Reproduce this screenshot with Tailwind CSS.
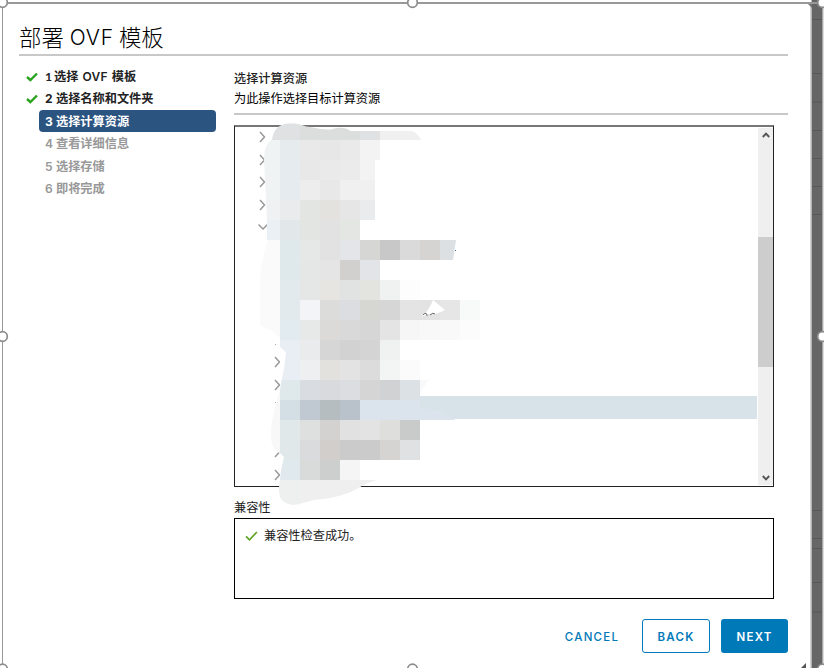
<!DOCTYPE html>
<html lang="zh-CN">
<head>
    <meta charset="UTF-8">
    <meta name="viewport" content="width=device-width, initial-scale=1.0">
    <title>部署 OVF 模板</title>
    <script src="https://cdn.jsdelivr.net/npm/@tailwindcss/browser@4"></script>
</head>
<body class="bg-white overflow-hidden font-['Lato','Noto_Sans_CJK_SC',sans-serif] text-[#222]">
    <div class="relative flex w-[824px] h-[668px] overflow-hidden">
        <!-- Dialog -->
        <div class="flex flex-col w-[811px] h-full pl-[19px] pr-[23px] border-t-2 border-transparent">
            <h1 class="flex items-center h-[54px] pt-[19px] text-[22.4px] font-light leading-[32px] text-black whitespace-nowrap border-b-2 border-[#c8c8c8]">
                <span>部署</span>
                <span class="ml-[6px] mr-[5px] font-['Inter'] text-[21px] font-light tracking-[0.8px]">OVF</span>
                <span>模板</span>
            </h1>

            <div class="flex">
                <!-- Steps -->
                <ol class="w-[215px] pt-[9px] pr-[18px] text-[12.2px] font-bold leading-[23.4px] whitespace-nowrap">
                    <li class="flex items-center h-[22.4px] pt-[1px]">
                        <svg class="w-[12px] h-[10px] ml-[7px] mr-[7px]" viewBox="0 0 12 10"><path d="M1 5l3.4 3L11 1.500" fill="none" stroke="#2ba51f" stroke-width="2.400"/></svg>
                        <span class="w-[9px]">1</span>选择
                        <span class="mx-[4px] font-['Inter'] font-semibold text-[12px] tracking-[0.3px]">OVF</span>模板
                    </li>
                    <li class="flex items-center h-[22.4px] pt-[1px]">
                        <svg class="w-[12px] h-[10px] ml-[7px] mr-[7px]" viewBox="0 0 12 10"><path d="M1 5l3.4 3L11 1.500" fill="none" stroke="#2ba51f" stroke-width="2.400"/></svg>
                        <span class="w-[11px] font-['Inter'] text-[12px]">2</span>选择名称和文件夹
                    </li>
                    <li class="flex ml-[20px] pl-[6px] h-[22.4px] rounded bg-[#2b5480] text-white">
                        <span class="w-[11px] font-['Inter'] text-[12px]">3</span>选择计算资源
                    </li>
                    <li class="flex pl-[26px] h-[22.4px] text-[#989898]">
                        <span class="w-[11px] font-['Inter'] text-[12px] font-semibold">4</span>查看详细信息
                    </li>
                    <li class="flex pl-[26px] h-[22.4px] text-[#989898]">
                        <span class="w-[11px] font-['Inter'] text-[12px] font-semibold">5</span>选择存储
                    </li>
                    <li class="flex pl-[26px] h-[22.4px] text-[#989898]">
                        <span class="w-[11px] font-['Inter'] text-[12px] font-semibold">6</span>即将完成
                    </li>
                </ol>

                <!-- Step content -->
                <div class="w-[554px] text-[12.2px]">
                    <div class="h-[59px] pt-[13px] border-b-2 border-[#c8c8c8]">
                        <h2 class="h-[20px] leading-[20px] font-medium">选择计算资源</h2>
                        <p class="leading-[20px] text-black">为此操作选择目标计算资源</p>
                    </div>

                    <!-- Resource tree -->
                    <div class="flex w-[540px] h-[362px] mt-[10px] border border-[#222] border-t-2 border-t-[#777]">
                        <ul id="tree" class="w-[522px] -mt-[1px] overflow-hidden"></ul>
                        <div class="flex flex-col items-center w-[15px] ml-[1px] my-[1px] bg-[#efefef]">
                            <svg class="w-[8px] h-[6px] mt-[4px]" viewBox="0 0 8 6"><path d="M.8 5L4 1.6 7.2 5" fill="none" stroke="#555" stroke-width="1.900"/></svg>
                            <div class="w-full h-[130px] mt-[99px] bg-[#cdcdcd]"></div>
                            <svg class="w-[8px] h-[6px] mt-auto mb-[4px]" viewBox="0 0 8 6"><path d="M.8 1L4 4.4 7.2 1" fill="none" stroke="#555" stroke-width="1.900"/></svg>
                        </div>
                    </div>

                    <!-- Compatibility -->
                    <h3 class="h-[31px] pt-[11px] leading-[20px]">兼容性</h3>
                    <div class="flex w-[540px] h-[81px] pt-[7px] pl-[10px] border border-black">
                        <svg class="w-[13px] h-[10px] mt-[5px] mr-[6px]" viewBox="0 0 12 10"><path d="M.6 5.4l3.4 3.4L11.4 1" fill="none" stroke="#5aa220" stroke-width="1.600"/></svg>
                        <p class="leading-[20px]">兼容性检查成功。</p>
                    </div>
                </div>
            </div>

            <!-- Buttons -->
            <div class="flex justify-end mt-[20px] font-['Inter'] text-[11.5px] font-medium tracking-[1.25px] text-[#0079b8]">
                <button class="w-[78px] h-[34px] mr-[11px] pt-[3px]">CANCEL</button>
                <button class="w-[68px] h-[34px] mr-[11px] pt-[3px] font-semibold border border-[#0079b8] rounded-[3px]">BACK</button>
                <button class="w-[67px] h-[34px] pt-[3px] font-semibold rounded-[3px] bg-[#0079b8] text-white">NEXT</button>
            </div>
        </div>

        <!-- Dimmed page behind the dialog -->
        <div class="w-[12px] h-full bg-[#666] border-l border-[#bbb]"></div>

        <svg id="overlay" class="absolute inset-0" width="824" height="668" viewBox="0 0 824 668">
            <!-- Smudged area over the tree -->
            <g id="smudge">
                <path d="M272 140C273 130 279 124 288 123.500C298 123 302 125 306 126.500C318 128 322 130 331 129.500C339 126.500 347 128 350 131H410C416 132 419 136 420.500 140Z" fill="#e0e1e2"/>
                <path d="M300 126L318 129 330 130 340 128 347 129 350 131H360V140H300Z" fill="#dcdddd"/>
                <path d="M380 131H410C416 132 419 136 420.500 140H380Z" fill="#f0f0f0"/>
                <path d="M280 140H271C266 144 264 151 264 160L266 200H280Z" fill="#eff3f4"/>
                <path d="M266 200H280V220H267Z" fill="#f0f1f3"/>
                <path d="M267 220H280V240H267Z" fill="#eaf0f4"/>
                <path d="M268 240H280V338L274 332C272 330 262 329 260 324V278Q262 256 268 240Z" fill="#fafafa"/>
                <path d="M280 390Q270 420 271 440Q274 452 280 453Z" fill="#f8f8f8"/>
                <path d="M420 380H429L420 392Z" fill="#f8f9fa"/>
                <path d="M360 400H420V408Q443 410 455 420H360Z" fill="#dbe3ec"/>
                <path d="M280 480H377C361 484 359 490 345 494C328 500 317 498 303 503Q288 507 281 499Q278 492 280 480Z" fill="#efefef"/>
                <path d="M280 480H300V504Q288 507 281 499Q278 492 280 480Z" fill="#edf0ee"/>
            </g>
            <g id="blocks" shape-rendering="crispEdges"></g>
            <path d="M433 300l12 10q-8 5-16 4l-8 3q8-6 12-17z" fill="#fff"/>
            <path d="M423 315q4-4 4 1M430 315q3-3 5-1" fill="none" stroke="#666" stroke-width="1"/>
            <path d="M280 347l6 5q-1 16-5 31l-1 7zM280 453l4 4-3 13-1 10z" fill="#fff"/>
            <path d="M456 240h5v20h-8z" fill="#fff"/>
            <path d="M455 250.500h1" stroke="#2a6fb0"/>
            <path d="M275 402.500h1M275 344.500h1" stroke="#aaa"/>

            <!-- Lines of the page behind -->
            <path d="M812 19.500h10M812 73.500h10M812 102h10M812 130.500h10M812 158.500h10M812 186.500h10M812 214.500h10M812 510.500h10M812 538.500h10M812 548.500h10M812 582.500h10M812 612h10" stroke="#575757"/>

            <!-- Selection frame and handles -->
            <path d="M2 3H820" stroke="#999" stroke-width="2"/>
            <path d="M2.500 4V668" stroke="#999"/>
            <path d="M811 4V668" stroke="#aaa"/>
            <path d="M808 4h4v4z" fill="#777"/>
            <path d="M822.500 4V668" stroke="#a5a5a5" stroke-width="1"/>
            <path d="M823.500 4V668" stroke="#ddd"/>
            <g fill="#fff" stroke="#8c8c8c" stroke-width="1.700">
                <circle cx="2.500" cy="2.500" r="4.800"/>
                <circle cx="412.500" cy="2.500" r="4.800"/>
                <circle cx="822.500" cy="2.500" r="4.800"/>
                <circle cx="2.500" cy="336.500" r="4.800"/>
                <circle cx="822.500" cy="336.500" r="4.800"/>
                <circle cx="2.500" cy="669" r="4.800"/>
                <circle cx="412.500" cy="669" r="4.800"/>
                <circle cx="822.500" cy="669" r="4.800"/>
            </g>
            <path d="M801 668l5-5v5z" fill="#555"/>
        </svg>
    </div>

    <script>
        // Tree rows: c = collapsed, e = expanded, s = selected, C = collapsed child
        const tree = document.getElementById('tree');
        for (const type of 'cccce-----CCs-CC') {
            const row = document.createElement('li');
            row.className = 'flex items-center h-[22.5px]';
            if (type === 's') row.className += ' ml-[185px] bg-[#d8e3e9]';
            if (type !== '-' && type !== 's') {
                const margin = type === 'C' ? 'ml-[38px]' : 'ml-[23px]';
                const d = type === 'e' ? 'M.5 3.5L5 8l4.500-4.500' : 'M2 1l4.500 5L2 11';
                row.innerHTML = `<svg class="w-[10px] h-[12px] ${margin}" viewBox="0 0 10 12"><path d="${d}" fill="none" stroke="#999" stroke-width="1.500"/></svg>`;
            }
            tree.appendChild(row);
        }

        // 20px blocks, one line per row, starting at x=280 y=140
        const blocks = [
            'e6ebee e9e9e9 e7e7e7 eaeaea f3f3f3',
            'e6ebef e8e8e8 eaeaea ebebeb f3f3f3',
            'e6ebef ededed e8e8e8 f0f0f0 f0f0f0',
            'e9ebec e3e5e3 e3e2df e6e6e6 e9ebed',
            'e2e7ea e3e5e3 e2e2e2 e4e6e4',
            'dfe8eb e6e8e7 e2e2e2 e4e5e8 d6d6d4 c8c8c8 dadada d6d4d2 dde0e2',
            'dfe8eb e5e7e6 e5e5e5 d2d0ce e3e4e8',
            'e2eaed e5e7e6 e6e5e2 e0e3e1 e3e3e0 eff2f0 fdfdfd',
            'e2eaed f2f4f7 dcdcda dcdde1 d6d7d3 d6d6d6 e4e4e4 e3e3e3 e6e6e6 f8faf9',
            'e2ebef e6e9e7 dcdad8 d9d9d9 d6d6d6 e4e4e4 f6f6f6 f8f8f8 f9f9f9 fcfcfc',
            'e8eef3 e9ebed d6d6d6 d2d2d2 d4d4d4 eff2f0',
            'e8eef3 eeeff0 e2e1de e3e3e3 dcdcdc f3f5f4 fbfbfb',
            'dfe8ea d9dce0 d9dadd dcdde0 d5d5d6 d1d2d3 dce1e5',
            'd3dfe5 c0c8d1 b5bdc0 b9c1ca',
            'e0e8ea dee0df d3d2d0 e1e1e1 e3e3e3 dededc c9cbca',
            'e0e8ea dadbdc d1cecc cbcbcb cbcbcb d5d4d2 e0e1e3',
            'e0eaee d9dbda cdcfce f5f5f5'
        ];
        let rects = '';
        blocks.forEach((line, r) => line.split(' ').forEach((color, c) => {
            const width = c === 4 && r > 0 && r < 4 ? 15 : 20;
            rects += `<rect x="${280 + c * 20}" y="${140 + r * 20}" width="${width}" height="20" fill="#${color}"/>`;
        }));
        document.getElementById('blocks').innerHTML = rects;
    </script>
</body>
</html>
